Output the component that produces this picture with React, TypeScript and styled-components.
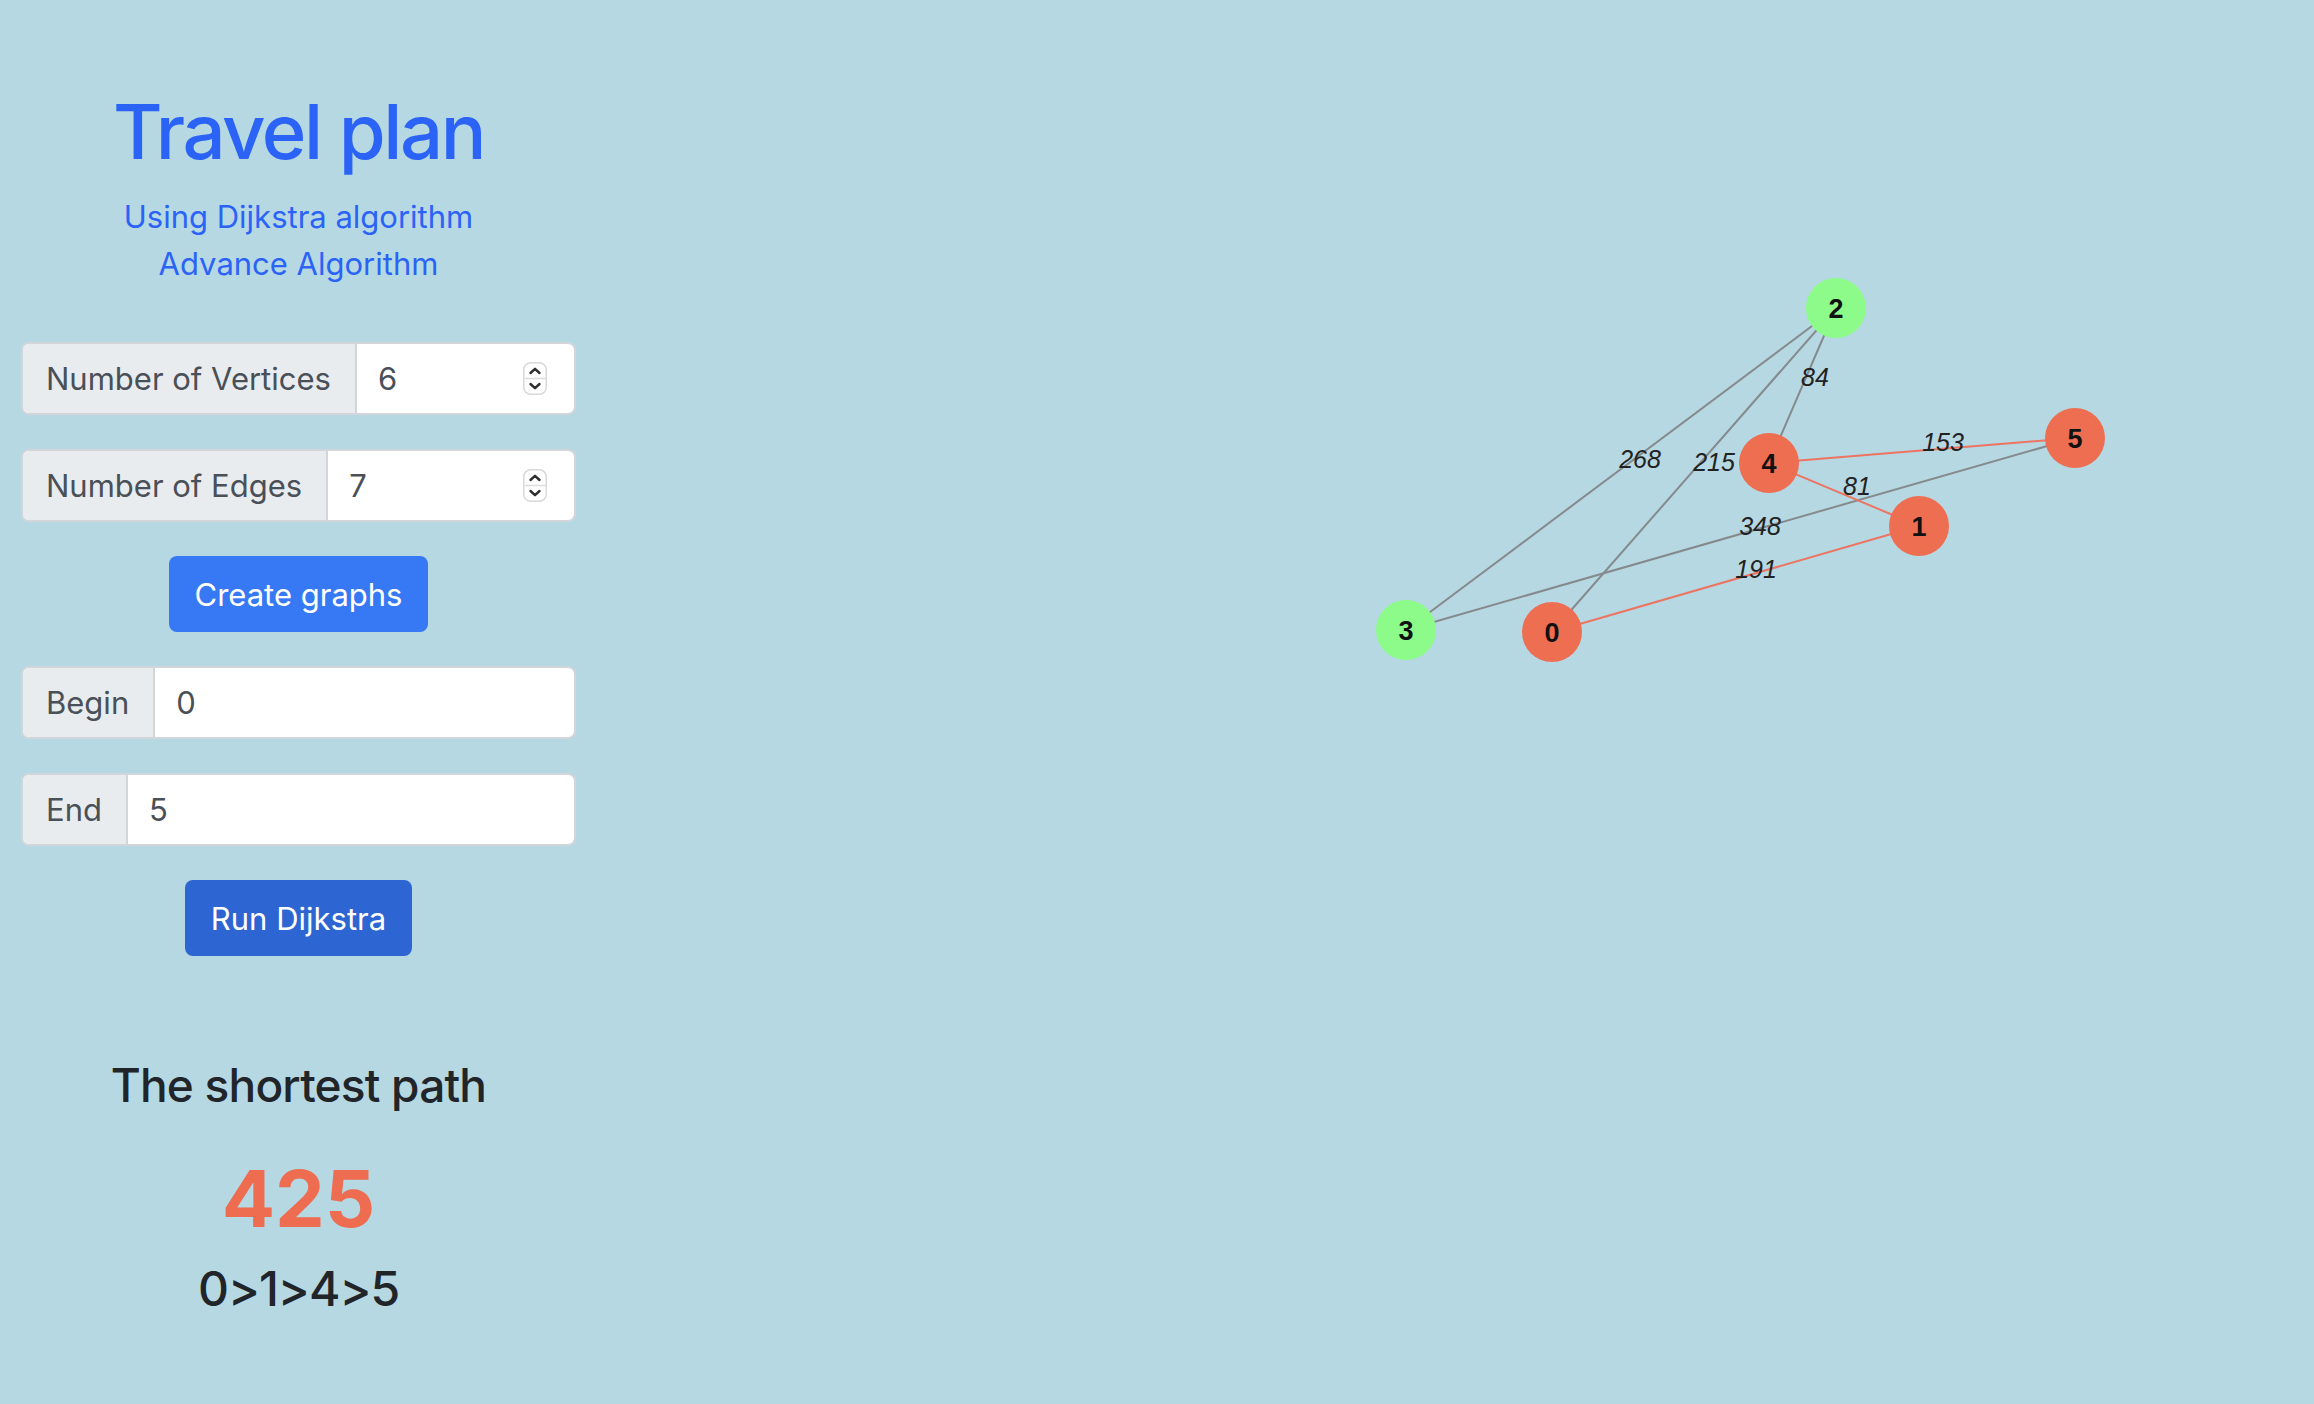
import styled, { createGlobalStyle } from "styled-components";

const GlobalStyle = createGlobalStyle`
  html, body {
    margin: 0;
    padding: 0;
    background-color: #b6d8e3;
  }
  body {
    font-family: Inter, "Noto Sans", "Liberation Sans", sans-serif;
    color: #212529;
  }
  * {
    box-sizing: border-box;
  }
`;

const Page = styled.div`
  display: grid;
  grid-template-columns: 597px 1fr;
  width: 2314px;
  height: 1404px;
  overflow: hidden;
`;

const Sidebar = styled.div`
  display: flex;
  flex-direction: column;
  align-items: center;
  padding: 84px 21px 0;
`;

const Title = styled.h1`
  margin: 0 0 15px;
  font-size: 76px;
  font-weight: 500;
  line-height: 94px;
  color: #2b63f6;
  letter-spacing: -2.4px;
`;

const Subtitle = styled.p`
  margin: 0 0 55px;
  font-size: 31px;
  line-height: 47px;
  text-align: center;
  color: #2b63f6;
`;

const Form = styled.div`
  display: flex;
  flex-direction: column;
  align-items: center;
  gap: 34px;
  width: 100%;
`;

const InputGroup = styled.div`
  display: flex;
  width: 100%;
  height: 73px;
  border: 2px solid #d2d6da;
  border-radius: 8px;
  overflow: hidden;
  background: #ffffff;
`;

const GroupLabel = styled.span`
  display: flex;
  align-items: center;
  flex-shrink: 0;
  padding: 0 24px 0 23px;
  background: #e9ecef;
  border-right: 2px solid #d2d6da;
  font-size: 31px;
  color: #495057;
  white-space: nowrap;
`;

const Field = styled.div`
  flex: 1;
  min-width: 0;
  display: flex;
  align-items: center;
  padding-right: 27px;

  svg {
    flex-shrink: 0;
  }
`;

const Input = styled.input`
  flex: 1;
  width: 0;
  min-width: 0;
  height: 100%;
  border: none;
  outline: none;
  background: transparent;
  padding: 0 21px;
  font-family: inherit;
  font-size: 31px;
  color: #495057;
  -moz-appearance: textfield;

  &::-webkit-outer-spin-button,
  &::-webkit-inner-spin-button {
    -webkit-appearance: none;
    margin: 0;
  }
`;

const Button = styled.button<{ $dark?: boolean }>`
  height: 76px;
  padding: 0 26px;
  border: none;
  border-radius: 8px;
  background: ${(props) => (props.$dark ? "#2d65d3" : "#3779f5")};
  color: #ffffff;
  font-family: inherit;
  font-size: 31px;
  line-height: 1;
  cursor: pointer;
`;

const Result = styled.div`
  display: flex;
  flex-direction: column;
  align-items: center;
  margin-top: 99px;
`;

const ResultTitle = styled.h3`
  margin: 0 0 35px;
  font-size: 46px;
  font-weight: 500;
  line-height: 60px;
  letter-spacing: -0.8px;
  color: #212529;
`;

const Distance = styled.div`
  font-size: 79px;
  font-weight: 700;
  line-height: 96px;
  color: #ee6d51;
  margin-bottom: 12px;
`;

const PathText = styled.h3`
  margin: 0;
  font-size: 48px;
  font-weight: 500;
  line-height: 61px;
  letter-spacing: -1px;
  color: #212529;
`;

const GraphArea = styled.div`
  position: relative;
`;

const GraphSvg = styled.svg`
  display: block;
  width: 1717px;
  height: 1404px;
`;

function Spinner() {
  return (
    <svg width="24" height="33" viewBox="0 0 24 33">
      <rect x="0.75" y="0.75" width="22.5" height="31.5" rx="7" fill="#ffffff" stroke="#d8d8d8" strokeWidth="1.5" />
      <line x1="1.5" y1="16.5" x2="22.5" y2="16.5" stroke="#dddddd" strokeWidth="1.5" />
      <path d="M7.5 11 L12 6.8 L16.5 11" fill="none" stroke="#2f2f2f" strokeWidth="2.4" strokeLinecap="round" strokeLinejoin="round" />
      <path d="M7.5 22 L12 26.2 L16.5 22" fill="none" stroke="#2f2f2f" strokeWidth="2.4" strokeLinecap="round" strokeLinejoin="round" />
    </svg>
  );
}

type GraphNode = { id: number; x: number; y: number; visited: boolean };
type GraphEdge = { from: number; to: number; w: number; onPath: boolean; lx: number; ly: number };

const nodes: GraphNode[] = [
  { id: 0, x: 1552, y: 632, visited: true },
  { id: 1, x: 1919, y: 526, visited: true },
  { id: 2, x: 1836, y: 308, visited: false },
  { id: 3, x: 1406, y: 630, visited: false },
  { id: 4, x: 1769, y: 463, visited: true },
  { id: 5, x: 2075, y: 438, visited: true },
];

const edges: GraphEdge[] = [
  { from: 2, to: 3, w: 268, onPath: false, lx: 1640, ly: 459 },
  { from: 2, to: 0, w: 215, onPath: false, lx: 1714, ly: 462 },
  { from: 2, to: 4, w: 84, onPath: false, lx: 1815, ly: 377 },
  { from: 3, to: 5, w: 348, onPath: false, lx: 1760, ly: 526 },
  { from: 4, to: 5, w: 153, onPath: true, lx: 1943, ly: 442 },
  { from: 4, to: 1, w: 81, onPath: true, lx: 1857, ly: 486 },
  { from: 0, to: 1, w: 191, onPath: true, lx: 1756, ly: 569 },
];

function Graph() {
  const byId = (id: number) => nodes.find((n) => n.id === id)!;
  return (
    <GraphSvg viewBox="597 0 1717 1404">
      {edges.map((e) => {
        const a = byId(e.from);
        const b = byId(e.to);
        return (
          <line
            key={`${e.from}-${e.to}`}
            x1={a.x}
            y1={a.y}
            x2={b.x}
            y2={b.y}
            stroke={e.onPath ? "#ec7461" : "#858a8c"}
            strokeWidth="2"
          />
        );
      })}
      {edges.map((e) => (
        <text
          key={`l-${e.from}-${e.to}`}
          x={e.lx}
          y={e.ly}
          textAnchor="middle"
          dominantBaseline="central"
          fontFamily="'Liberation Sans', Arial, sans-serif"
          fontStyle="italic"
          fontSize="25"
          fill="#222222"
        >
          {e.w}
        </text>
      ))}
      {nodes.map((n) => (
        <g key={n.id}>
          <circle cx={n.x} cy={n.y} r="30" fill={n.visited ? "#ee6e51" : "#8cfb8a"} />
          <text
            x={n.x}
            y={n.y + 1}
            textAnchor="middle"
            dominantBaseline="central"
            fontFamily="'Liberation Sans', Arial, sans-serif"
            fontWeight="700"
            fontSize="27"
            fill="#111111"
          >
            {n.id}
          </text>
        </g>
      ))}
    </GraphSvg>
  );
}

export default function App() {
  return (
    <>
      <GlobalStyle />
      <Page>
        <Sidebar>
          <Title>Travel plan</Title>
          <Subtitle>
            Using Dijkstra algorithm
            <br />
            Advance Algorithm
          </Subtitle>
          <Form>
            <InputGroup>
              <GroupLabel>Number of Vertices</GroupLabel>
              <Field>
                <Input type="number" defaultValue={6} />
                <Spinner />
              </Field>
            </InputGroup>
            <InputGroup>
              <GroupLabel>Number of Edges</GroupLabel>
              <Field>
                <Input type="number" defaultValue={7} />
                <Spinner />
              </Field>
            </InputGroup>
            <Button>Create graphs</Button>
            <InputGroup>
              <GroupLabel>Begin</GroupLabel>
              <Field>
                <Input type="text" defaultValue="0" />
              </Field>
            </InputGroup>
            <InputGroup>
              <GroupLabel>End</GroupLabel>
              <Field>
                <Input type="text" defaultValue="5" />
              </Field>
            </InputGroup>
            <Button $dark>Run Dijkstra</Button>
          </Form>
          <Result>
            <ResultTitle>The shortest path</ResultTitle>
            <Distance>425</Distance>
            <PathText>0&gt;1&gt;4&gt;5</PathText>
          </Result>
        </Sidebar>
        <GraphArea>
          <Graph />
        </GraphArea>
      </Page>
    </>
  );
}
